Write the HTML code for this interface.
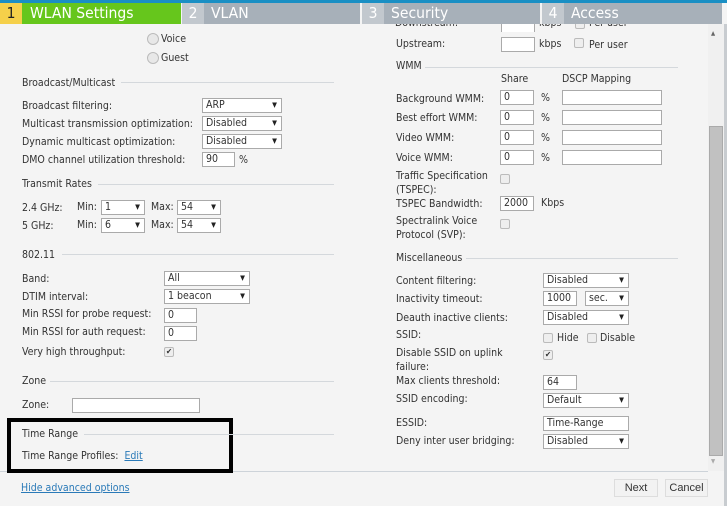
<!DOCTYPE html>
<html><head><meta charset="utf-8"><style>
*{box-sizing:border-box;margin:0;padding:0}
body{width:727px;height:506px;overflow:hidden;background:#f4f4f4;font-family:"DejaVu Sans Condensed","DejaVu Sans","Liberation Sans",sans-serif;font-size:10.5px;color:#333;position:relative}
.a{position:absolute;white-space:nowrap;line-height:14px}
.t{position:absolute;top:3px;height:21px;color:#fff;font-size:15.5px;line-height:21px;font-family:"DejaVu Sans Condensed","DejaVu Sans",sans-serif}
.n{position:absolute;top:0;height:21px;width:22px;text-align:center}
.sel,.in{position:absolute;background:#fff;border:1px solid #aaa;height:15px;line-height:13px;padding-left:3px;font-size:10.5px}
.sel:after{content:"▼";position:absolute;right:4px;top:0;font-size:7px;color:#222}
.hr{position:absolute;height:1px;background:#d4d8dc}
.cb{position:absolute;width:10px;height:10px;border:1px solid #bbb;background:#eee;border-radius:2px;font-size:8px;line-height:8px;text-align:center;color:#333}
.rd{position:absolute;width:12px;height:12px;border:1px solid #bbb;border-radius:50%;background:#e8e8e8}
.btn{position:absolute;height:18px;background:#f2f2f2;border:1px solid #ddd;text-align:center;line-height:16px;color:#333;font-family:"Liberation Sans",sans-serif;font-size:11px}
a{color:#2a7ab8;text-decoration:underline}
</style></head><body>
<div style="position:absolute;left:0;top:0;width:727px;height:3px;background:#1a8fc4"></div>
<div class="t" style="left:0;width:181px;background:#66c61c"><div class="n" style="background:#f5d04a;color:#222">1</div><span style="position:absolute;left:30px">WLAN Settings</span></div>
<div class="t" style="left:182px;width:178px;background:#a7b0b9"><div class="n" style="background:#c2c8ce">2</div><span style="position:absolute;left:29px">VLAN</span></div>
<div class="t" style="left:362px;width:178px;background:#a7b0b9"><div class="n" style="background:#c2c8ce">3</div><span style="position:absolute;left:29px">Security</span></div>
<div class="t" style="left:542px;width:180px;background:#a7b0b9"><div class="n" style="background:#c2c8ce">4</div><span style="position:absolute;left:29px">Access</span></div>

<div style="position:absolute;left:708px;top:24px;width:16px;height:447px;background:#f0f0f0"></div>
<div style="position:absolute;left:709px;top:126px;width:14px;height:330px;background:#c1c1c1;border:1px solid #aaa"></div>
<div style="position:absolute;left:724px;top:24px;width:3px;height:482px;background:#c8ccd0"></div>
<div class="a" style="left:711px;top:27px;font-size:6px;color:#666">▲</div>
<div class="a" style="left:711px;top:455px;font-size:6px;color:#aaa">▼</div>

<div class="rd" style="left:147px;top:33px"></div><div class="a" style="left:161px;top:32px">Voice</div>
<div class="rd" style="left:147px;top:52px"></div><div class="a" style="left:161px;top:51px">Guest</div>

<div class="a" style="left:22px;top:76px">Broadcast/Multicast</div><div class="hr" style="left:121px;top:82px;width:213px"></div>
<div class="a" style="left:22px;top:99px">Broadcast filtering:</div><div class="sel" style="left:202px;top:98px;width:80px">ARP</div>
<div class="a" style="left:22px;top:117px">Multicast transmission optimization:</div><div class="sel" style="left:202px;top:116px;width:80px">Disabled</div>
<div class="a" style="left:22px;top:135px">Dynamic multicast optimization:</div><div class="sel" style="left:202px;top:134px;width:80px">Disabled</div>
<div class="a" style="left:22px;top:153px">DMO channel utilization threshold:</div><div class="in" style="left:202px;top:152px;width:33px">90</div><div class="a" style="left:239px;top:153px">%</div>

<div class="a" style="left:22px;top:177px">Transmit Rates</div><div class="hr" style="left:98px;top:184px;width:236px"></div>
<div class="a" style="left:22px;top:201px">2.4 GHz:</div><div class="a" style="left:77px;top:200px">Min:</div><div class="sel" style="left:101px;top:200px;width:44px">1</div><div class="a" style="left:151px;top:200px">Max:</div><div class="sel" style="left:177px;top:200px;width:44px">54</div>
<div class="a" style="left:22px;top:219px">5 GHz:</div><div class="a" style="left:77px;top:218px">Min:</div><div class="sel" style="left:101px;top:218px;width:44px">6</div><div class="a" style="left:151px;top:218px">Max:</div><div class="sel" style="left:177px;top:218px;width:44px">54</div>

<div class="a" style="left:22px;top:248px">802.11</div><div class="hr" style="left:62px;top:254px;width:272px"></div>
<div class="a" style="left:22px;top:272px">Band:</div><div class="sel" style="left:164px;top:271px;width:86px">All</div>
<div class="a" style="left:22px;top:290px">DTIM interval:</div><div class="sel" style="left:164px;top:289px;width:86px">1 beacon</div>
<div class="a" style="left:22px;top:307px">Min RSSI for probe request:</div><div class="in" style="left:164px;top:308px;width:33px">0</div>
<div class="a" style="left:22px;top:325px">Min RSSI for auth request:</div><div class="in" style="left:164px;top:326px;width:33px">0</div>
<div class="a" style="left:22px;top:345px">Very high throughput:</div><div class="cb" style="left:164px;top:347px">✔</div>

<div class="a" style="left:22px;top:374px">Zone</div><div class="hr" style="left:50px;top:381px;width:284px"></div>
<div class="a" style="left:22px;top:398px">Zone:</div><div class="in" style="left:72px;top:398px;width:128px"></div>

<div class="hr" style="left:0;top:471px;width:708px;background:#cdd3d9"></div>
<div style="position:absolute;left:7px;top:418px;width:226px;height:55px;border:4px solid #000"></div>
<div class="a" style="left:22px;top:427px">Time Range</div><div class="hr" style="left:84px;top:434px;width:250px"></div>
<div class="a" style="left:22px;top:449px">Time Range Profiles: <a style="margin-left:3px">Edit</a></div>
<div class="a" style="left:21px;top:481px"><a>Hide advanced options</a></div>

<div style="position:absolute;left:364px;top:24px;width:340px;height:8px;overflow:hidden">
 <div class="in" style="left:137px;top:-4px;width:34px"></div>
 <div class="a" style="left:31px;top:-8px">Downstream:</div><div class="a" style="left:175px;top:-8px">kbps</div>
 <div class="cb" style="left:211px;top:-5px"></div><div class="a" style="left:225px;top:-8px">Per user</div>
</div>
<div class="a" style="left:396px;top:37px">Upstream:</div><div class="in" style="left:501px;top:37px;width:34px"></div><div class="a" style="left:539px;top:37px">kbps</div>
<div class="cb" style="left:574px;top:38px"></div><div class="a" style="left:589px;top:38px">Per user</div>

<div class="a" style="left:396px;top:59px">WMM</div><div class="hr" style="left:425px;top:67px;width:253px"></div>
<div class="a" style="left:501px;top:72px">Share</div><div class="a" style="left:562px;top:72px">DSCP Mapping</div>
<div class="a" style="left:396px;top:92px">Background WMM:</div><div class="in" style="left:500px;top:90px;width:34px">0</div><div class="a" style="left:541px;top:91px">%</div><div class="in" style="left:562px;top:90px;width:100px"></div>
<div class="a" style="left:396px;top:111px">Best effort WMM:</div><div class="in" style="left:500px;top:110px;width:34px">0</div><div class="a" style="left:541px;top:111px">%</div><div class="in" style="left:562px;top:110px;width:100px"></div>
<div class="a" style="left:396px;top:131px">Video WMM:</div><div class="in" style="left:500px;top:130px;width:34px">0</div><div class="a" style="left:541px;top:131px">%</div><div class="in" style="left:562px;top:130px;width:100px"></div>
<div class="a" style="left:396px;top:151px">Voice WMM:</div><div class="in" style="left:500px;top:150px;width:34px">0</div><div class="a" style="left:541px;top:151px">%</div><div class="in" style="left:562px;top:150px;width:100px"></div>
<div class="a" style="left:396px;top:169px">Traffic Specification<br>(TSPEC):</div><div class="cb" style="left:500px;top:174px"></div>
<div class="a" style="left:396px;top:197px">TSPEC Bandwidth:</div><div class="in" style="left:500px;top:196px;width:34px">2000</div><div class="a" style="left:541px;top:196px">Kbps</div>
<div class="a" style="left:396px;top:214px">Spectralink Voice<br>Protocol (SVP):</div><div class="cb" style="left:500px;top:219px"></div>

<div class="a" style="left:396px;top:251px">Miscellaneous</div><div class="hr" style="left:466px;top:258px;width:212px"></div>
<div class="a" style="left:396px;top:274px">Content filtering:</div><div class="sel" style="left:543px;top:273px;width:86px">Disabled</div>
<div class="a" style="left:396px;top:292px">Inactivity timeout:</div><div class="in" style="left:543px;top:291px;width:34px">1000</div><div class="sel" style="left:585px;top:291px;width:44px">sec.</div>
<div class="a" style="left:396px;top:311px">Deauth inactive clients:</div><div class="sel" style="left:543px;top:310px;width:86px">Disabled</div>
<div class="a" style="left:396px;top:328px">SSID:</div><div class="cb" style="left:543px;top:333px"></div><div class="a" style="left:557px;top:331px">Hide</div><div class="cb" style="left:587px;top:333px"></div><div class="a" style="left:600px;top:331px">Disable</div>
<div class="a" style="left:396px;top:346px">Disable SSID on uplink<br>failure:</div><div class="cb" style="left:543px;top:350px">✔</div>
<div class="a" style="left:396px;top:374px">Max clients threshold:</div><div class="in" style="left:543px;top:375px;width:34px">64</div>
<div class="a" style="left:396px;top:392px">SSID encoding:</div><div class="sel" style="left:543px;top:393px;width:86px">Default</div>
<div class="a" style="left:396px;top:416px">ESSID:</div><div class="in" style="left:543px;top:416px;width:86px">Time-Range</div>
<div class="a" style="left:396px;top:434px">Deny inter user bridging:</div><div class="sel" style="left:543px;top:434px;width:86px">Disabled</div>

<div class="btn" style="left:614px;top:479px;width:44px">Next</div>
<div class="btn" style="left:665px;top:479px;width:43px">Cancel</div>
</body></html>
